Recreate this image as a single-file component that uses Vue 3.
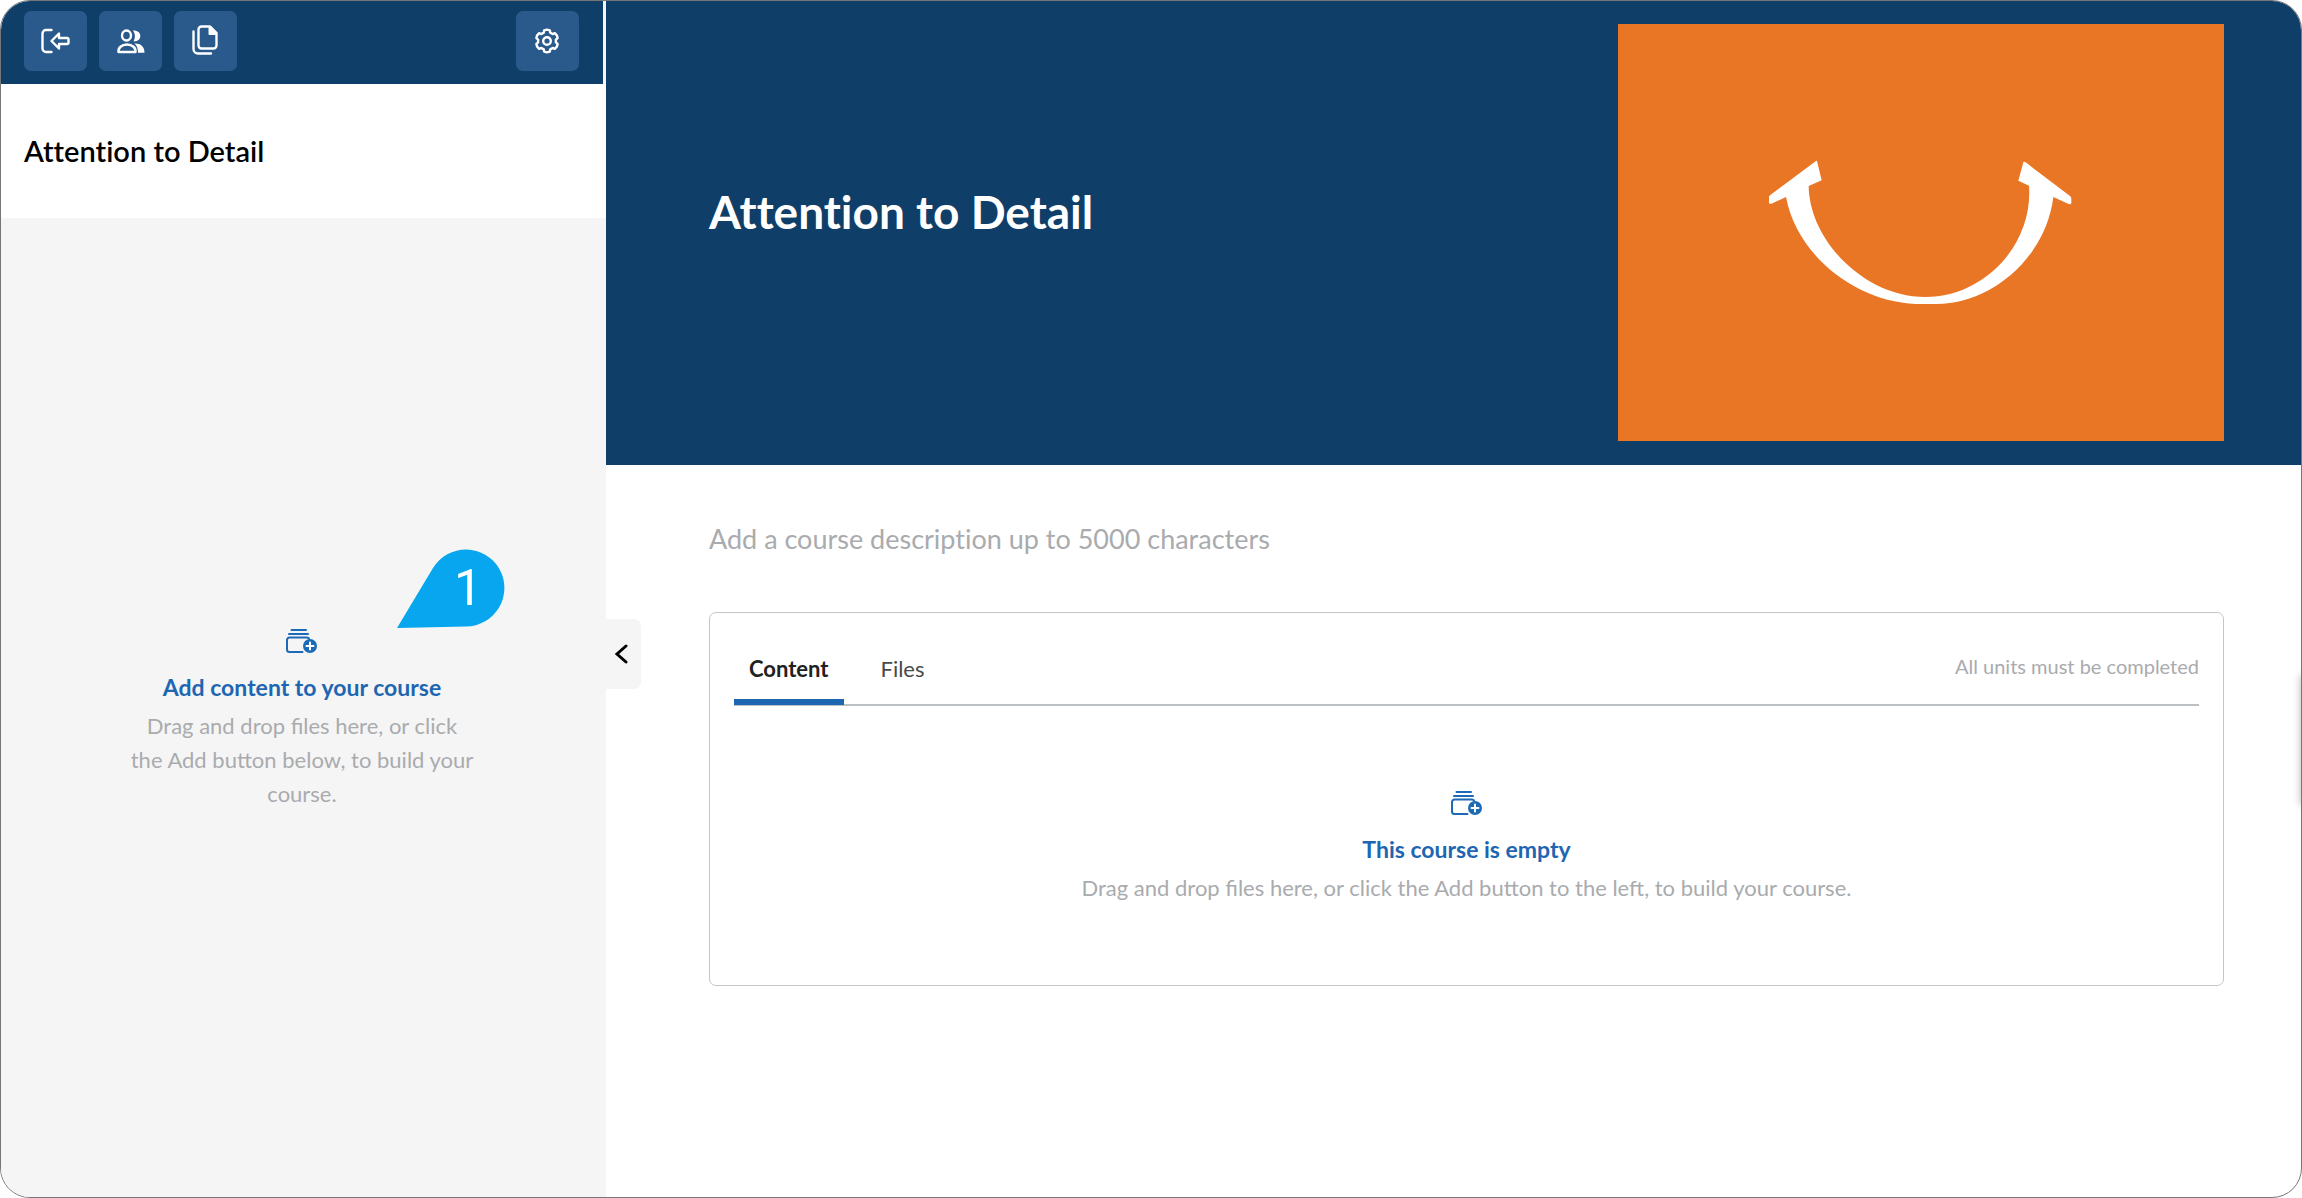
<script setup>
import { ref } from 'vue'

const title = 'Attention to Detail'
const description = ref('')
const activeTab = ref('Content')
const tabs = ['Content', 'Files']

// Outline of the settings cog: six lobes around the centre
const cogPath = (() => {
  const points = []
  for (let i = 0; i < 6; i++) {
    for (const [offset, radius] of [[-21, 9], [-15, 11], [0, 11.4], [15, 11], [21, 9]]) {
      const angle = ((i * 60 + offset - 90) * Math.PI) / 180
      points.push(`${(31 + Math.cos(angle) * radius).toFixed(2)} ${(30 + Math.sin(angle) * radius).toFixed(2)}`)
    }
  }
  return `M${points.join('L')}Z`
})()
</script>

<template>
  <div class="app">
    <aside class="sidebar">
      <nav class="toolbar">
        <button class="tool" type="button" aria-label="Exit">
          <svg viewBox="0 0 63 60">
            <path d="M27.500 19h-5.500a3.500 3.500 0 0 0-3.500 3.500v15a3.500 3.500 0 0 0 3.500 3.500h5.500" />
            <path d="M27.500 30l7.500-7.500v4.500h8q1.500 0 1.500 1.500v3q0 1.500-1.500 1.500h-8v4.500z" />
          </svg>
        </button>
        <button class="tool" type="button" aria-label="Users">
          <svg viewBox="0 0 63 60">
            <ellipse cx="27.500" cy="24.500" rx="4.500" ry="5" />
            <path d="M19.500 41c-.5-4 3-7.500 8.500-7.500s9 3.500 8.500 7.500z" />
            <path class="solid" d="M34 19.500c4 0 7.300 1.500 7.300 5.500s-3.300 5.700-6.800 5.300c2-3.500 2-7.300-.5-10.800z" />
            <path class="solid" d="M35.500 32.500c6-.3 10 3 10 9.200h-6.500c0-4-.8-6.800-3.500-9.200z" />
          </svg>
        </button>
        <button class="tool" type="button" aria-label="Files">
          <svg viewBox="0 0 63 60">
            <path d="M27.500 15.500h8.500l6.500 6.500v12.500a3 3 0 0 1-3 3h-12a3 3 0 0 1-3-3v-16a3 3 0 0 1 3-3z" />
            <path class="solid" d="M34.500 15h2.500l6 6.500v2.500h-7.500q-1 0-1-1z" />
            <path d="M19.500 20.500v17.500a4.500 4.500 0 0 0 4.500 4.500h13" />
          </svg>
        </button>
        <button class="tool settings" type="button" aria-label="Settings">
          <svg viewBox="0 0 63 60">
            <path :d="cogPath" />
            <circle cx="31" cy="30" r="3.800" />
          </svg>
        </button>
      </nav>
      <h2 class="course-name">{{ title }}</h2>
      <div class="drop-area">
        <div class="empty narrow">
          <svg class="stack" viewBox="0 0 32 26">
            <path d="M5.500 2h14.500M3 6h19M16.500 24H3.500a2.500 2.500 0 0 1-2.500-2.500V12a2.500 2.500 0 0 1 2.500-2.500H21q1.500 0 2 1" />
            <circle cx="24" cy="18" r="7" />
            <path class="plus" d="M20.500 18h7M24 14.500v7" />
          </svg>
          <h3>Add content to your course</h3>
          <p>Drag and drop files here, or click the Add button below, to build your course.</p>
        </div>
        <div class="pin">
          <svg viewBox="0 0 108 80">
            <path d="M0 79L36 19A38.500 38.500 0 1 1 69 77.500z" />
          </svg>
          <span>1</span>
        </div>
      </div>
      <button class="collapse" type="button" aria-label="Collapse sidebar">
        <svg viewBox="0 0 14 20"><path d="M12 2L3 10l9 8" /></svg>
      </button>
    </aside>

    <main class="main">
      <header class="hero">
        <h1>{{ title }}</h1>
        <svg class="cover" viewBox="0 0 606 417" role="img" aria-label="Course image">
          <rect width="606" height="417" />
          <g transform="translate(122 116) scale(.33333)">
            <path d="M231 63L245 121L206 138C208 300 372 471 556 471C736 471 880 310 867 137L835 122L850 67Q852 63 857 67L990 168Q995 172 994 179V190Q991 195 986 192L940 171C918 354 752 492 590 492H528C350 485 172 350 138 171L94 191Q88 193 87 188V170Q87 168 91 165L225 65Q229 61 231 63Z" />
          </g>
        </svg>
      </header>

      <div class="body">
        <input
          v-model="description"
          class="description"
          type="text"
          maxlength="5000"
          aria-label="Course description"
          placeholder="Add a course description up to 5000 characters"
        />
        <section class="card">
          <div class="card-head">
            <div class="tabs" role="tablist">
              <button
                v-for="tab in tabs"
                :key="tab"
                class="tab"
                :class="{ active: tab === activeTab }"
                type="button"
                role="tab"
                :aria-selected="tab === activeTab"
                @click="activeTab = tab"
              >{{ tab }}</button>
            </div>
            <span class="rule">All units must be completed</span>
          </div>
          <div class="empty">
            <svg class="stack" viewBox="0 0 32 26">
              <path d="M5.500 2h14.500M3 6h19M16.500 24H3.500a2.500 2.500 0 0 1-2.500-2.500V12a2.500 2.500 0 0 1 2.500-2.500H21q1.500 0 2 1" />
              <circle cx="24" cy="18" r="7" />
              <path class="plus" d="M20.500 18h7M24 14.500v7" />
            </svg>
            <h3>This course is empty</h3>
            <p>Drag and drop files here, or click the Add button to the left, to build your course.</p>
          </div>
        </section>
      </div>
      <div class="drawer-edge"></div>
    </main>
  </div>
</template>

<style>
body {
  margin: 0;
  background: #fff;
}
</style>

<style scoped>
.app {
  display: flex;
  box-sizing: border-box;
  min-height: 100vh;
  border: 1px solid #777;
  border-radius: 30px;
  overflow: hidden;
  background: #fff;
  color: #000;
  font-family: Lato, "Open Sans", sans-serif;
}

h1,
h2,
h3,
p {
  margin: 0;
}

h1,
h2,
.description {
  font-variant-ligatures: none;
}

button {
  padding: 0;
  border: 0;
  font-family: inherit;
  cursor: pointer;
}

.sidebar {
  position: relative;
  display: flex;
  flex-direction: column;
  flex: 0 0 605px;
  background: #f5f5f5;
}

.toolbar {
  display: flex;
  gap: 12px;
  padding: 10px 24px 13px 23px;
  border-right: 3px solid #f5f5f5;
  background: #0f3e69;
}

.tool {
  width: 63px;
  height: 60px;
  border-radius: 7px;
  background: #2a5a8b;
}

.tool svg {
  display: block;
  fill: none;
  stroke: #fff;
  stroke-width: 2.4;
  stroke-linecap: round;
  stroke-linejoin: round;
}

.tool .solid {
  fill: #fff;
  stroke: none;
}

.settings {
  margin-left: auto;
}

.course-name {
  padding: 50px 23px;
  background: #fff;
  font-size: 29px;
  font-weight: 600;
  line-height: 34px;
}

.drop-area {
  position: relative;
  flex: 1;
  padding: 410px 3px 0 0;
}

.empty {
  display: flex;
  flex-direction: column;
  align-items: center;
  color: #a9abae;
  font-size: 22px;
  line-height: 34px;
  text-align: center;
}

.narrow {
  width: 344px;
  margin: 0 auto;
}

.empty h3 {
  margin: 16px 0 5px;
  color: #1e66b2;
  font-size: 23px;
  font-weight: 700;
}

.stack {
  width: 32px;
  height: 26px;
  fill: none;
  stroke: #1c69b5;
  stroke-width: 2;
  stroke-linecap: round;
}

.stack circle {
  fill: #1c69b5;
  stroke: none;
}

.stack .plus {
  stroke: #fff;
}

.pin {
  position: absolute;
  top: 331px;
  left: 396px;
  width: 108px;
  height: 80px;
}

.pin svg {
  display: block;
  fill: #08a6ee;
}

.pin span {
  position: absolute;
  top: 9px;
  left: 57px;
  color: #fff;
  font: 50px/60px Roboto, sans-serif;
}

.collapse {
  position: absolute;
  top: 618px;
  left: 100%;
  width: 35px;
  height: 70px;
  padding-right: 5px;
  border-radius: 0 7px 7px 0;
  background: #f5f5f5;
}

.collapse svg {
  display: block;
  width: 14px;
  margin: 0 auto;
  fill: none;
  stroke: #000;
  stroke-width: 3;
  stroke-linecap: round;
}

.main {
  position: relative;
  flex: 1;
  min-width: 0;
}

.hero {
  display: flex;
  align-items: flex-start;
  justify-content: space-between;
  padding: 23px 77px 24px 103px;
  background: #0f3e69;
}

.hero h1 {
  padding-top: 160px;
  color: #fff;
  font-size: 46px;
  font-weight: 700;
  line-height: 56px;
}

.cover {
  width: 606px;
  height: 417px;
}

.cover rect {
  fill: #e97625;
}

.cover path {
  fill: #fff;
}

.body {
  padding: 53px 77px 60px 103px;
}

.description {
  display: block;
  box-sizing: border-box;
  width: 100%;
  height: 40px;
  padding: 0;
  border: 0;
  outline: 0;
  color: #000;
  font-family: inherit;
  font-size: 27px;
}

.description::placeholder {
  color: #a9abae;
  opacity: 1;
}

.card {
  margin-top: 54px;
  padding: 24px 24px 80px;
  border: 1px solid #c3c6c9;
  border-radius: 7px;
}

.card-head {
  display: flex;
  align-items: stretch;
  justify-content: space-between;
  margin-bottom: 84px;
  border-bottom: 2px solid #bcc1c5;
}

.tabs {
  display: flex;
  gap: 22px;
}

.tab {
  height: 68px;
  margin-bottom: -1px;
  padding: 0 15px;
  border-bottom: 6px solid transparent;
  background: none;
  color: #4a4a4a;
  font-size: 22px;
}

.tab.active {
  border-color: #1c66b2;
  color: #212121;
  font-weight: 700;
}

.rule {
  padding-top: 12px;
  color: #a9abae;
  font-size: 20px;
  line-height: 34px;
}

/* Shadow of the closed drawer past the right side */
.drawer-edge {
  position: absolute;
  top: 674px;
  left: 100%;
  width: 20px;
  height: 130px;
  box-shadow: 0 0 8px rgba(0, 0, 0, 0.3);
}
</style>
